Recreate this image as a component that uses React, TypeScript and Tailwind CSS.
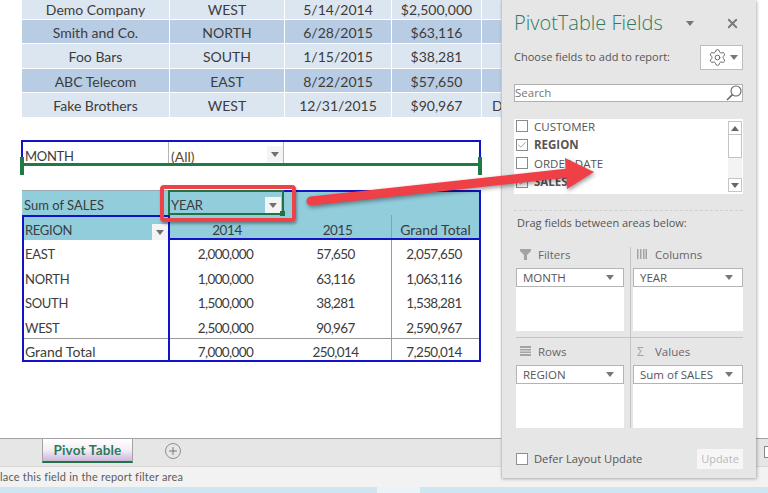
import { Check, Plus, Settings, X } from "lucide-react";

const dataRows = [
  ["Demo Company", "WEST", "5/14/2014", "$2,500,000", ""],
  ["Smith and Co.", "NORTH", "6/28/2015", "$63,116", ""],
  ["Foo Bars", "SOUTH", "1/15/2015", "$38,281", ""],
  ["ABC Telecom", "EAST", "8/22/2015", "$57,650", ""],
  ["Fake Brothers", "WEST", "12/31/2015", "$90,967", "D"],
];

const pivotRows = [
  ["EAST", "2,000,000", "57,650", "2,057,650"],
  ["NORTH", "1,000,000", "63,116", "1,063,116"],
  ["SOUTH", "1,500,000", "38,281", "1,538,281"],
  ["WEST", "2,500,000", "90,967", "2,590,967"],
];

function Caret({ className = "" }: { className?: string }) {
  return (
    <svg width="8" height="5" viewBox="0 0 8 5" className={className}>
      <path d="M0 0h8L4 5z" fill="currentColor" />
    </svg>
  );
}

function CellDrop({ className = "" }: { className?: string }) {
  return (
    <div className={`flex h-[16px] w-[16px] shrink-0 items-center justify-center bg-[#f4f4f4] text-[#6f6f6f] ${className}`}>
      <Caret />
    </div>
  );
}

function FieldRow({ label, checked, bold }: { label: string; checked?: boolean; bold?: boolean }) {
  return (
    <div className="flex h-[18.6px] items-center gap-[6px] pl-[2px]">
      <div className="flex h-[12px] w-[12px] shrink-0 items-center justify-center border border-[#8a8a8a] bg-white">
        {checked && <Check size={10} strokeWidth={1.5} className="text-[#666]" />}
      </div>
      <span className={`text-[11.5px] text-[#555] ${bold ? "font-bold" : ""}`}>{label}</span>
    </div>
  );
}

function Area({ icon, label, field, className = "" }: { icon: React.ReactNode; label: string; field: string; className?: string }) {
  return (
    <div className={className}>
      <div className="flex h-[21px] items-start">
        <div className="flex w-[22px] justify-start pl-[4px] pt-[2px] text-[#a3a3a3]">{icon}</div>
        <span className="text-[11.5px] leading-[15px] text-[#666]">{label}</span>
      </div>
      <div className="h-[63px] bg-white">
        <div className="flex h-[19px] items-center justify-between border border-[#b4b4b4] pl-[6px] pr-[9px] text-[11.5px] text-[#555]">
          <span>{field}</span>
          <Caret className="text-[#777]" />
        </div>
      </div>
    </div>
  );
}

export default function App() {
  return (
    <div className="relative flex h-[493px] w-[768px] flex-col overflow-hidden bg-white font-['Lato',sans-serif] text-[#3c3c3c]">
      {/* worksheet */}
      <div className="h-[438px] pl-[22px]">
        <div className="grid grid-cols-[147px_114px_106px_89px_60px] grid-rows-[19px_23px_24px_23px_24px] gap-px text-[14px]">
          {dataRows.map((row, i) =>
            row.map((cell, j) => (
              <div
                key={`${i}-${j}`}
                className={`flex items-center ${i % 2 === 0 ? "bg-[#dce6f1]" : "bg-[#b8cce4]"} ${j === 4 ? "justify-start pl-[10px]" : "justify-center"} ${i > 0 ? "pt-[1px]" : ""}`}
              >
                {cell}
              </div>
            ))
          )}
        </div>

        {/* report filter */}
        <div className="relative mt-[23px] flex h-[25px] w-[460px] -translate-x-[1px] border-x-2 border-t-2 border-[#1212c8] text-[13px]">
          <div className="w-[146px] border-r border-[#b5b5b5] pl-[2px] pt-[5px] tracking-[-0.3px]">MONTH</div>
          <div className="flex w-[115px] items-start justify-between border-r border-[#b5b5b5] pl-[2px] pt-[4px] text-[14px] text-[#5a4a30]">
            (All)
            <CellDrop />
          </div>
          <div className="absolute -left-[2px] -right-[2px] top-[21px] h-[3px] bg-[#1f7a45]" />
          <div className="absolute -left-[3px] top-[15px] h-[18px] w-[4px] bg-[#1f7a45]" />
          <div className="absolute -right-[3px] top-[15px] h-[18px] w-[4px] bg-[#1f7a45]" />
        </div>

        {/* pivot table */}
        <div className="relative mt-[25px] grid w-[459px] grid-cols-[146px_116px_107px_90px] grid-rows-[25px_25px_repeat(4,24.5px)_24px] text-[13.5px]">
          <div className="flex items-end border-t border-[#9aa9ad] bg-[#92cddc] pl-[2px] text-[13px]">Sum of SALES</div>
          <div className="relative flex items-end justify-between border-2 border-[#217346] bg-[#92cddc] px-[1px] text-[13px] leading-[16px] tracking-[-0.2px]">
            YEAR
            <CellDrop />
            <div className="absolute -bottom-[3px] -right-[3px] h-[5px] w-[5px] bg-[#217346]" />
          </div>
          <div className="col-span-2 border-r-2 border-t-2 border-[#1212c8] bg-[#92cddc]" />

          <div className="flex items-end justify-between border-l-2 border-t-2 border-[#1212c8] bg-[#92cddc] pl-[1px] text-[13px] tracking-[-0.3px]">
            REGION
            <CellDrop />
          </div>
          <div className="flex items-end justify-center border-b-2 border-l-2 border-[#1212c8] bg-[#92cddc] leading-[16px] tracking-[-0.4px]">2014</div>
          <div className="flex items-end justify-center border-b-2 border-[#1212c8] bg-[#92cddc] leading-[16px] tracking-[-0.4px]">2015</div>
          <div className="flex items-center justify-center border-b-2 border-r-2 border-[#1212c8] bg-[#92cddc]">
            <span className="flex h-full w-full items-end justify-center border-l border-[#9a9a9a] text-[14px] leading-[16px]">Grand Total</span>
          </div>

          {pivotRows.map((row) => (
            <div key={row[0]} className="contents">
              <div className="flex items-end border-l-2 border-[#1212c8] pl-[1px] text-[13px] tracking-[-0.3px]">{row[0]}</div>
              <div className="flex items-end justify-center border-l-2 border-[#1212c8] pr-[3px] tracking-[-0.6px]">{row[1]}</div>
              <div className="flex items-end justify-center pr-[4px] tracking-[-0.6px]">{row[2]}</div>
              <div className="flex items-center justify-center border-r-2 border-[#1212c8]">
                <span className="flex h-full w-full items-end justify-center border-l border-[#9a9a9a] pr-[3px] tracking-[-0.6px]">{row[3]}</span>
              </div>
            </div>
          ))}
          <div className="flex items-end border-b-2 border-l-2 border-[#1212c8] pl-[1px] text-[14px] leading-[16px] shadow-[inset_0_1px_0_#9a9a9a]">Grand Total</div>
          <div className="flex items-end justify-center border-b-2 border-l-2 border-[#1212c8] pr-[3px] leading-[16px] tracking-[-0.6px] shadow-[inset_0_1px_0_#9a9a9a]">7,000,000</div>
          <div className="flex items-end justify-center border-b-2 border-[#1212c8] pr-[4px] leading-[16px] tracking-[-0.6px] shadow-[inset_0_1px_0_#9a9a9a]">250,014</div>
          <div className="flex items-center justify-center border-b-2 border-r-2 border-[#1212c8] shadow-[inset_0_1px_0_#9a9a9a]">
            <span className="flex h-full w-full items-end justify-center border-l border-[#9a9a9a] pr-[3px] leading-[16px] tracking-[-0.6px]">7,250,014</span>
          </div>

          {/* red callout */}
          <div className="absolute left-[138px] top-[-5px] h-[37px] w-[136px] rounded-[4px] border-[4px] border-[#ee4249] shadow-[1px_2px_3px_rgba(0,0,0,0.35)]" />
        </div>
      </div>

      {/* sheet tabs */}
      <div className="flex h-[29px] items-start border-y border-t-[#a3a3a3] border-b-[#d6d6d6] bg-[#e6e6e6] pl-[42px]">
        <div className="flex h-[24px] w-[91px] items-center justify-center border-x border-b-2 border-x-[#a3a3a3] border-b-[#217346] bg-gradient-to-b from-[#ffffff] via-[#f3eef6] to-[#cdb5dc] text-[13.5px] font-bold tracking-[0.2px] text-[#2a7a5c]">
          Pivot Table
        </div>
        <div className="ml-[32px] mt-[4px] flex h-[16px] w-[16px] items-center justify-center rounded-full border border-[#8f8f8f] text-[#777]">
          <Plus size={12} strokeWidth={2} />
        </div>
        <div className="ml-auto mt-[7px] h-[12px] w-[4px] border-y border-l border-[#888] bg-white" />
      </div>

      {/* status bar */}
      <div className="flex h-[20px] items-center bg-[#f2f2f2] text-[11px] tracking-[0.2px] text-[#5c5c5c]">
        lace this field in the report filter area
      </div>
      <div className="flex h-[6px] bg-[#cfe6f2]">
        <div className="w-[377px]" />
        <div className="w-[43px] bg-[#eaf3f8]" />
      </div>

      {/* PivotTable Fields pane */}
      <div className="absolute left-[501px] top-0 flex h-[478px] w-[255px] flex-col border-l border-[#c9c9c9] bg-[#e6e6e6] pl-[12px] pr-[13px] font-['Open_Sans',sans-serif] shadow-[1px_1px_3px_rgba(0,0,0,0.3)]">
        <div className="mt-[11px] flex h-[24px] items-center">
          <span className="text-[20px] font-light leading-none text-[#2f7a62]">PivotTable Fields</span>
          <Caret className="ml-[23px] text-[#777]" />
          <X size={15} strokeWidth={3} className="ml-[31px] text-[#7b7b7b]" />
        </div>
        <div className="mt-[10px] flex h-[25px] items-center justify-between">
          <span className="text-[11px] text-[#555]">Choose fields to add to report:</span>
          <div className="flex h-[25px] w-[43px] items-center gap-[3px] border border-[#bdbdbd] bg-white pl-[7px] text-[#555]">
            <Settings size={19} strokeWidth={1.1} />
            <Caret className="text-[#777]" />
          </div>
        </div>
        <div className="mt-[14px] flex h-[18px] items-center justify-between border border-[#b0b0b0] bg-white text-[11.5px] text-[#777]">
          Search
          <svg width="16" height="16" viewBox="0 0 16 16" fill="none" stroke="#666" strokeWidth="1.1">
            <circle cx="10" cy="6" r="5" />
            <path d="M6.4 9.600 1 15" strokeWidth="1.500" />
          </svg>
        </div>
        <div className="relative mt-[17px] h-[75px] overflow-hidden bg-white">
          <div className="-mt-[2px]">
            <FieldRow label="CUSTOMER" />
            <FieldRow label="REGION" checked bold />
            <FieldRow label="ORDER DATE" />
            <FieldRow label="SALES" checked bold />
          </div>
          <div className="absolute bottom-[2px] right-[1px] top-[2px] flex w-[14px] flex-col bg-[#f3f3f3]">
            <div className="flex h-[14px] items-center justify-center border border-[#c4c4c4] bg-white text-[#666]">
              <Caret className="rotate-180" />
            </div>
            <div className="h-[23px] border-x border-b border-[#c4c4c4] bg-white" />
            <div className="flex-1" />
            <div className="flex h-[14px] items-center justify-center border border-[#c4c4c4] bg-white text-[#666]">
              <Caret />
            </div>
          </div>
        </div>
        <div className="mt-[16px] border-t border-dashed border-[#cfcfcf]" />
        <div className="ml-[3px] mt-[4px] text-[11px] leading-[16px] text-[#555]">Drag fields between areas below:</div>
        <div className="ml-[2px] mt-[16px] grid h-[181px] grid-cols-[115px_1fr] grid-rows-[91px_90px]">
          <Area
            label="Filters"
            field="MONTH"
            className="border-b border-r border-[#c4c4c4] pb-[6px] pr-[6px]"
            icon={
              <svg width="11" height="11" viewBox="0 0 11 11">
                <path d="M0 0h11v2L7 6v5H4V6L0 2z" fill="currentColor" />
              </svg>
            }
          />
          <Area
            label="Columns"
            field="YEAR"
            className="border-b border-[#c4c4c4] pb-[6px] pl-[2px]"
            icon={
              <svg width="10" height="10" viewBox="0 0 10 10">
                <path d="M0 0h1.500v10H0zM3 0h1.500v10H3zM6 0h1.500v10H6zM8.500 0h1.500v10H8.500z" fill="currentColor" />
              </svg>
            }
          />
          <Area
            label="Rows"
            field="REGION"
            className="border-r border-[#c4c4c4] pr-[6px] pt-[6px]"
            icon={
              <svg width="11" height="10" viewBox="0 0 11 10">
                <path d="M0 0h11v2H0zM0 3h11v1.500H0zM0 5.500h11V7H0zM0 8h11v2H0z" fill="currentColor" />
              </svg>
            }
          />
          <Area
            label="Values"
            field="Sum of SALES"
            className="pl-[2px] pt-[6px]"
            icon={<span className="text-[12px] leading-none">Σ</span>}
          />
        </div>
        <div className="ml-[2px] mt-[21px] flex h-[20px] items-center">
          <div className="h-[12px] w-[12px] border border-[#8f8f8f] bg-white" />
          <span className="ml-[6px] text-[11.2px] text-[#555]">Defer Layout Update</span>
          <div className="ml-auto flex h-[20px] w-[46px] items-center justify-center bg-[#f6f6f6] text-[11px] text-[#b9b9b9]">Update</div>
        </div>
      </div>

      {/* callout arrow */}
      <svg width="768" height="493" viewBox="0 0 768 493" className="pointer-events-none absolute left-0 top-0 drop-shadow-[1px_2px_2px_rgba(0,0,0,0.4)]">
        <path d="M311 201 568 173" stroke="#ef3f47" strokeWidth="9" strokeLinecap="round" fill="none" />
        <path d="M565 158 594 172 567 189z" fill="#ef3f47" />
      </svg>
    </div>
  );
}
